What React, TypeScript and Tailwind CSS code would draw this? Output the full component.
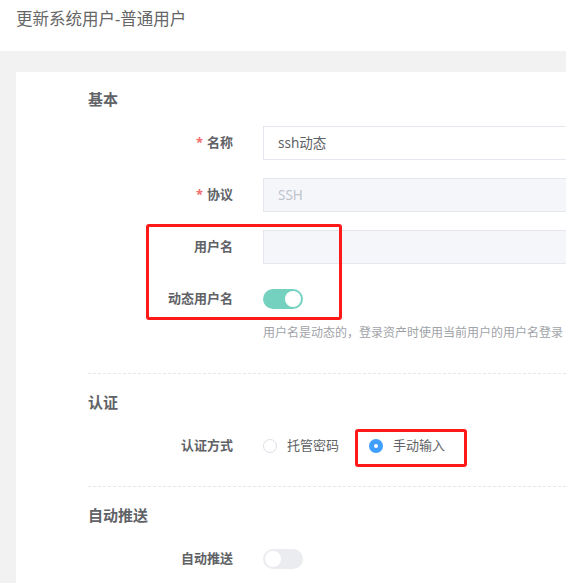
import type { ReactNode } from "react";

const FONT = {
  fontFamily: '"Noto Sans", "Noto Sans CJK SC", sans-serif',
};

const FormRow = ({
  label,
  required,
  children,
}: {
  label: string;
  required?: boolean;
  children: ReactNode;
}) => (
  <div className="flex h-[34px] items-center">
    <div className="w-[145px] shrink-0 text-right text-[13px] font-bold text-[#606266]">
      {required && <span className="mr-[4px] text-[#f56c6c]">*</span>}
      {label}
    </div>
    <div className="ml-[30px] flex flex-1 items-center">{children}</div>
  </div>
);

const Switch = ({ on }: { on: boolean }) => (
  <span
    className={
      on
        ? "relative inline-block h-[20px] w-[40px] rounded-full bg-[#75d1bf]"
        : "relative inline-block h-[20px] w-[40px] rounded-full bg-[#eaecf0]"
    }
  >
    <span
      className={
        on
          ? "absolute top-[2px] left-[22px] h-[16px] w-[16px] rounded-full bg-white"
          : "absolute top-[2px] left-[2px] h-[16px] w-[16px] rounded-full bg-white"
      }
    />
  </span>
);

const Radio = ({ checked, label }: { checked: boolean; label: string }) => (
  <label className="flex items-center">
    {checked ? (
      <span className="flex h-[14px] w-[14px] items-center justify-center rounded-full bg-[#409eff]">
        <span className="h-[4px] w-[4px] rounded-full bg-white" />
      </span>
    ) : (
      <span className="h-[14px] w-[14px] rounded-full border border-[#dcdfe6] bg-white" />
    )}
    <span className="ml-[10px] text-[13px] text-[#606266]">{label}</span>
  </label>
);

const SectionTitle = ({ children }: { children: ReactNode }) => (
  <div className="flex h-[20px] items-center text-[15px] font-bold text-[#606266]">
    {children}
  </div>
);

export default function App() {
  return (
    <div
      className="h-[583px] w-[566px] overflow-hidden bg-[#f2f2f2]"
      style={FONT}
    >
      {/* page header */}
      <div className="flex h-[51px] items-start bg-white pt-[7px] pl-[16px] text-[16.5px] leading-[24px] text-[#666]">
        更新系统用户-普通用户
      </div>

      <div className="pt-[21px] pl-[16px]">
        <div className="w-[700px] bg-white pt-[17px] pl-[72px] pb-[40px]">
          <SectionTitle>基本</SectionTitle>

          <div className="mt-[17px] flex flex-col gap-[18px]">
            <FormRow label="名称" required>
              <div className="flex h-[34px] w-[400px] items-center border border-[#e4e7ed] bg-white px-[14px] text-[13.5px] text-[#606266]">
                ssh动态
              </div>
            </FormRow>
            <FormRow label="协议" required>
              <div className="flex h-[34px] w-[400px] items-center border border-[#e4e7ed] bg-[#f5f6fa] px-[14px] text-[13.5px] text-[#c0c4cc]">
                SSH
              </div>
            </FormRow>

            <div className="relative flex flex-col gap-[18px]">
              <FormRow label="用户名">
                <div className="h-[34px] w-[400px] border border-[#e4e7ed] bg-[#f5f6fa]" />
              </FormRow>
              <FormRow label="动态用户名">
                <Switch on />
              </FormRow>
              <div className="absolute top-[-6px] left-[58px] h-[96px] w-[196px] rounded-[3px] border-[3px] border-[#ff1a1a]" />
            </div>
          </div>

          <div className="mt-[8px] ml-[175px] text-[12px] leading-[18px] text-[#a0a3a8]">
            用户名是动态的，登录资产时使用当前用户的用户名登录
          </div>

          <div className="mt-[31px] border-t border-dashed border-[#e4e7ed]" />

          <div className="mt-[18px]">
            <SectionTitle>认证</SectionTitle>
          </div>

          <div className="relative mt-[17px]">
            <FormRow label="认证方式">
              <div className="flex items-center gap-[30px]">
                <Radio checked={false} label="托管密码" />
                <Radio checked label="手动输入" />
              </div>
            </FormRow>
            <div className="absolute top-0 left-[267px] h-[38px] w-[112px] rounded-[3px] border-[3px] border-[#ff1a1a]" />
          </div>

          <div className="mt-[23px] border-t border-dashed border-[#e4e7ed]" />

          <div className="mt-[18px]">
            <SectionTitle>自动推送</SectionTitle>
          </div>

          <div className="mt-[17px]">
            <FormRow label="自动推送">
              <Switch on={false} />
            </FormRow>
          </div>
        </div>
      </div>
    </div>
  );
}
